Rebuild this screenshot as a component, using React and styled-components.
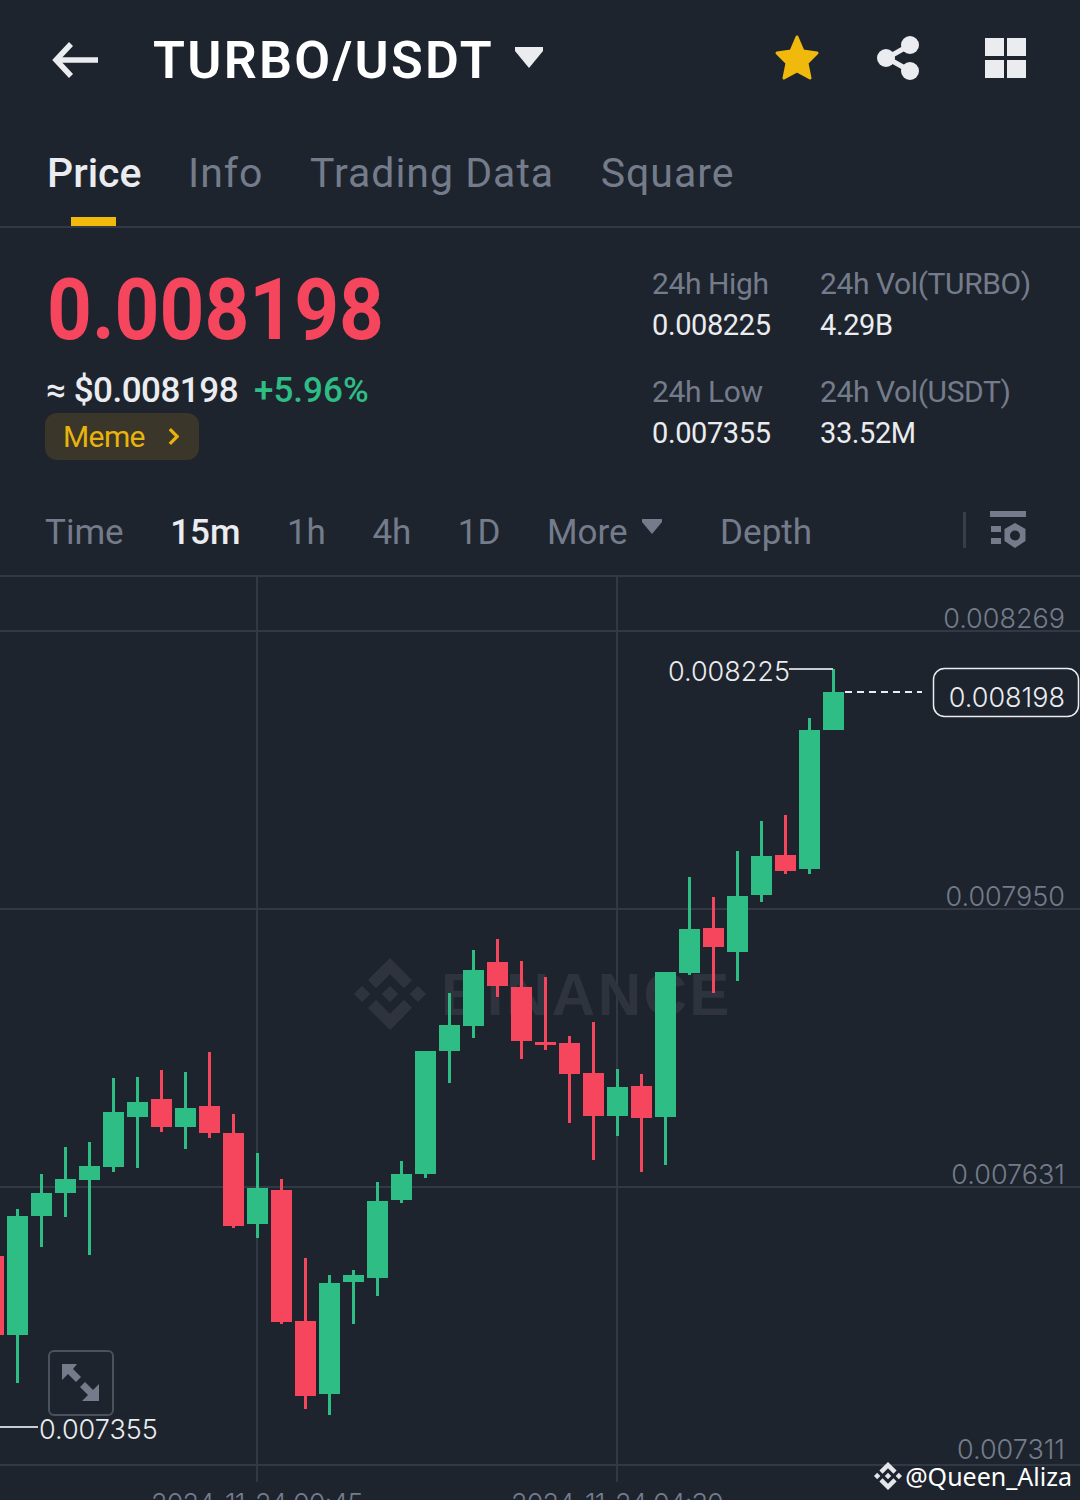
import React from "react";
import styled, { createGlobalStyle } from "styled-components";

const GREEN = "#2ebd85";
const RED = "#f6465d";
const BG = "#1e242e";
const MUTED = "#747c8b";
const LIGHT = "#eaecef";
const GRID = "#333944";

const GlobalStyle = createGlobalStyle`
  html, body {
    margin: 0;
    padding: 0;
    background: ${BG};
  }
`;

const Page = styled.div`
  width: 1080px;
  height: 1500px;
  display: flex;
  flex-direction: column;
  overflow: hidden;
  background: ${BG};
  font-family: Roboto, "Noto Sans", sans-serif;
  color: ${LIGHT};
`;

const Header = styled.header`
  height: 120px;
  display: flex;
  align-items: center;
  padding: 0 54px 0 52px;
  flex-shrink: 0;
`;

const Title = styled.h1`
  margin: 0 0 0 55px;
  font-size: 52px;
  font-weight: 600;
  color: #fff;
  letter-spacing: 2.3px;
`;

const TitleCaret = styled.svg`
  width: 28px;
  height: 21px;
  margin: 0 0 5px 21px;
`;

const HeaderIcons = styled.div`
  margin-left: auto;
  display: flex;
  align-items: center;
  gap: 57px;
  padding-bottom: 4px;
`;

const GridIcon = styled.svg`
  margin-left: 7px;
`;

const Tabs = styled.nav`
  height: 106px;
  display: flex;
  gap: 46.5px;
  padding-left: 47px;
  border-bottom: 2px solid ${GRID};
  flex-shrink: 0;
`;

const Tab = styled.div`
  position: relative;
  padding-top: 29px;
  font-size: 41px;
  font-weight: ${(p) => (p.$active ? 500 : 400)};
  letter-spacing: ${(p) => (p.$active ? 0 : 1)}px;
  color: ${(p) => (p.$active ? LIGHT : MUTED)};

  &::after {
    content: "";
    display: ${(p) => (p.$active ? "block" : "none")};
    position: absolute;
    left: 24px;
    bottom: 0;
    width: 45px;
    height: 9px;
    background: #f0b90b;
  }
`;

const Stats = styled.section`
  height: 262px;
  display: flex;
  justify-content: space-between;
  flex-shrink: 0;
`;

const Quote = styled.div`
  padding: 34px 0 0 46px;
`;

const BigPrice = styled.div`
  font-size: 86px;
  line-height: 96px;
  font-weight: 700;
  color: ${RED};
  margin-left: 1px;
  transform: scaleX(0.91);
  transform-origin: left center;
`;

const SubLine = styled.div`
  display: flex;
  gap: 16px;
  margin-top: 13px;
  font-size: 35px;
  line-height: 40px;
  font-weight: 500;
`;

const Approx = styled.span`
  letter-spacing: -0.5px;
`;

const Change = styled.span`
  color: ${GREEN};
`;

const MemeTag = styled.div`
  width: 154px;
  height: 47px;
  box-sizing: border-box;
  margin: 2px 0 0 -1px;
  padding: 0 0 0 18px;
  display: flex;
  align-items: center;
  gap: 23px;
  border-radius: 12px;
  background: #3a3629;
  color: #e8b30e;
  font-size: 30px;
  letter-spacing: -0.6px;
`;

const StatsGrid = styled.div`
  display: grid;
  grid-template-columns: 168px 214px;
  grid-auto-rows: 108px;
  margin: 38px 46px 0 0;
`;

const StatCell = styled.div`
  display: flex;
  flex-direction: column;
  gap: 5px;
  white-space: nowrap;
`;

const StatLabel = styled.span`
  font-size: 30px;
  line-height: 36px;
  letter-spacing: -0.4px;
  color: ${MUTED};
`;

const StatValue = styled.span`
  font-size: 29px;
  line-height: 36px;
  letter-spacing: -0.4px;
  color: ${LIGHT};
`;

const Toolbar = styled.div`
  height: 85px;
  display: flex;
  align-items: center;
  gap: 46.5px;
  padding: 0 54px 0 45px;
  flex-shrink: 0;
  box-sizing: border-box;
`;

const Interval = styled.span`
  display: inline-flex;
  align-items: center;
  font-size: 35px;
  font-weight: ${(p) => (p.$active ? 500 : 400)};
  color: ${(p) => (p.$active ? LIGHT : MUTED)};
`;

const MoreCaret = styled.svg`
  width: 20px;
  height: 15px;
  margin: 0 0 12px 14px;
`;

const DepthTab = styled(Interval)`
  margin-left: 12px;
`;

const ToolbarEnd = styled.div`
  margin-left: auto;
  display: flex;
  align-items: center;
  gap: 24px;
  margin-bottom: 6px;
`;

const Divider = styled.div`
  width: 3px;
  height: 36px;
  background: #373d49;
`;

const Chart = styled.div`
  position: relative;
  flex: 1;
  min-height: 0;
  border-top: 2px solid ${GRID};
`;

const ChartSvg = styled.svg`
  display: block;
  width: 1080px;
  height: 923px;
`;

const AxisText = styled.text`
  font-family: Inter, "Liberation Sans", sans-serif;
  font-size: 27px;
  font-weight: 300;
  fill: ${MUTED};
`;

const DateText = styled(AxisText)`
  letter-spacing: -0.9px;
`;

const MarkText = styled(AxisText)`
  fill: ${LIGHT};
`;

const Watermark = styled.text`
  font-family: "Liberation Sans", Inter, sans-serif;
  font-size: 60px;
  font-weight: 700;
  letter-spacing: 2.5px;
  fill: #2e333e;
`;

const ExpandButton = styled.div`
  position: absolute;
  left: 48px;
  top: 773px;
  width: 66px;
  height: 66px;
  box-sizing: border-box;
  display: flex;
  align-items: center;
  justify-content: center;
  border: 2px solid #4b515d;
  border-radius: 6px;
`;

const Credit = styled.div`
  position: absolute;
  right: 8px;
  bottom: 6px;
  display: flex;
  align-items: center;
  gap: 3px;
  font-family: "Noto Sans", Roboto, sans-serif;
  font-size: 25px;
  line-height: 36px;
  color: #fff;
`;

// [x center, wick top, body top, body bottom, wick bottom, colour]
const candles = [
  [-7, 1256, 1256, 1335, 1335, RED],
  [17, 1209, 1216, 1335, 1383, GREEN],
  [41, 1174, 1193, 1216, 1247, GREEN],
  [65, 1147, 1179, 1193, 1217, GREEN],
  [89, 1142, 1166, 1180, 1255, GREEN],
  [113, 1078, 1112, 1167, 1172, GREEN],
  [137, 1077, 1102, 1117, 1168, GREEN],
  [161, 1070, 1099, 1127, 1132, RED],
  [185, 1072, 1108, 1127, 1149, GREEN],
  [209, 1052, 1106, 1133, 1138, RED],
  [233, 1114, 1133, 1226, 1228, RED],
  [257, 1153, 1188, 1224, 1238, GREEN],
  [281, 1179, 1190, 1322, 1324, RED],
  [305, 1258, 1321, 1396, 1409, RED],
  [329, 1275, 1283, 1394, 1415, GREEN],
  [353, 1270, 1275, 1282, 1324, GREEN],
  [377, 1182, 1201, 1278, 1296, GREEN],
  [401, 1161, 1174, 1200, 1203, GREEN],
  [425, 1051, 1051, 1174, 1178, GREEN],
  [449, 993, 1025, 1051, 1083, GREEN],
  [473, 950, 970, 1026, 1038, GREEN],
  [497, 939, 962, 986, 997, RED],
  [521, 961, 987, 1041, 1059, RED],
  [545, 977, 1042, 1045, 1050, RED],
  [569, 1036, 1043, 1074, 1123, RED],
  [593, 1022, 1073, 1116, 1160, RED],
  [617, 1069, 1087, 1116, 1136, GREEN],
  [641, 1074, 1086, 1118, 1172, RED],
  [665, 972, 972, 1117, 1165, GREEN],
  [689, 877, 929, 973, 975, GREEN],
  [713, 897, 928, 947, 993, RED],
  [737, 851, 896, 952, 981, GREEN],
  [761, 821, 856, 895, 902, GREEN],
  [785, 815, 855, 871, 874, RED],
  [809, 718, 730, 869, 874, GREEN],
  [833, 669, 692, 730, 730, GREEN],
];

const axisLabels = [
  ["0.008269", 628],
  ["0.007950", 906],
  ["0.007631", 1184],
  ["0.007311", 1459],
];

const BinanceLogo = ({ x, y, size, fill, ...rest }) => (
  <svg x={x} y={y} width={size} height={size} viewBox="0 0 126.61 126.61" fill={fill} {...rest}>
    <path d="M38.73 53.2l24.59-24.58 24.6 24.6 14.3-14.31L63.32 0 24.42 38.9l14.31 14.3z" />
    <path d="M0 63.31l14.3-14.31 14.31 14.31-14.31 14.3z" />
    <path d="M38.73 73.41l24.59 24.59 24.6-24.6 14.31 14.29L63.32 126.61 24.42 87.72l14.31-14.31z" />
    <path d="M98 63.31l14.3-14.31 14.31 14.3-14.31 14.31z" />
    <path d="M77.83 63.3L63.32 48.78 52.59 59.51l-1.24 1.23-2.54 2.54 14.51 14.52 14.51-14.51z" />
  </svg>
);

const Candle = ({ data }) => {
  const [x, wickTop, bodyTop, bodyBottom, wickBottom, color] = data;
  return (
    <g fill={color}>
      <rect x={x - 1} y={wickTop} width={3} height={wickBottom - wickTop} />
      <rect x={x - 10} y={bodyTop} width={21} height={bodyBottom - bodyTop} />
    </g>
  );
};

const App = () => (
  <Page>
    <GlobalStyle />
    <Header>
      <svg width="46" height="36" viewBox="0 0 46 36" fill="none" stroke={LIGHT} strokeWidth="5.5">
        <path d="M19 2 L4 18 L19 34" />
        <path d="M4 18 H46" />
      </svg>
      <Title>TURBO/USDT</Title>
      <TitleCaret viewBox="0 0 28 21">
        <path d="M0 0 H28 V4 L14 21 L0 4 Z" fill={LIGHT} />
      </TitleCaret>
      <HeaderIcons>
        <svg width="46" height="46" viewBox="0 0 46 46">
          <path
            d="M23 2 L29 16 L43 18 L33 28 L36 43 L23 36 L10 43 L13 28 L3 18 L17 16 Z"
            fill="#f0b90b"
            stroke="#f0b90b"
            strokeWidth="3"
            strokeLinejoin="round"
          />
        </svg>
        <svg width="44" height="46" viewBox="0 0 44 46" fill={LIGHT} stroke={LIGHT}>
          <path d="M33 10 L10 23 L33 36" fill="none" strokeWidth="5" />
          <circle cx="33" cy="10" r="9" stroke="none" />
          <circle cx="9" cy="23" r="9" stroke="none" />
          <circle cx="33" cy="36" r="9" stroke="none" />
        </svg>
        <GridIcon width="41" height="40" viewBox="0 0 41 40" fill={LIGHT}>
          <rect x="0" y="0" width="19" height="18" />
          <rect x="22" y="0" width="19" height="18" />
          <rect x="0" y="22" width="19" height="18" />
          <rect x="22" y="22" width="19" height="18" />
        </GridIcon>
      </HeaderIcons>
    </Header>

    <Tabs>
      <Tab $active>Price</Tab>
      <Tab>Info</Tab>
      <Tab>Trading Data</Tab>
      <Tab>Square</Tab>
    </Tabs>

    <Stats>
      <Quote>
        <BigPrice>0.008198</BigPrice>
        <SubLine>
          <Approx>≈ $0.008198</Approx>
          <Change>+5.96%</Change>
        </SubLine>
        <MemeTag>
          Meme
          <svg width="11" height="17" viewBox="0 0 12 18" fill="none" stroke="#e8b30e" strokeWidth="3.5">
            <path d="M2 1 L10 9 L2 17" />
          </svg>
        </MemeTag>
      </Quote>
      <StatsGrid>
        <StatCell>
          <StatLabel>24h High</StatLabel>
          <StatValue>0.008225</StatValue>
        </StatCell>
        <StatCell>
          <StatLabel>24h Vol(TURBO)</StatLabel>
          <StatValue>4.29B</StatValue>
        </StatCell>
        <StatCell>
          <StatLabel>24h Low</StatLabel>
          <StatValue>0.007355</StatValue>
        </StatCell>
        <StatCell>
          <StatLabel>24h Vol(USDT)</StatLabel>
          <StatValue>33.52M</StatValue>
        </StatCell>
      </StatsGrid>
    </Stats>

    <Toolbar>
      <Interval>Time</Interval>
      <Interval $active>15m</Interval>
      <Interval>1h</Interval>
      <Interval>4h</Interval>
      <Interval>1D</Interval>
      <Interval>
        More
        <MoreCaret viewBox="0 0 20 15">
          <path d="M0 0 H20 V3 L10 15 L0 3 Z" fill={MUTED} />
        </MoreCaret>
      </Interval>
      <DepthTab>Depth</DepthTab>
      <ToolbarEnd>
        <Divider />
        <svg width="36" height="37" viewBox="0 0 36 37" fill={MUTED}>
          <rect x="0" y="0" width="36" height="6" />
          <rect x="1" y="15" width="10" height="6" />
          <rect x="1" y="27" width="10" height="6" />
          <path
            fillRule="evenodd"
            d="M25 12 L35.5 18 V30 L25 37 L14.5 30 V18 Z M25 19.5 A5 5 0 1 0 25 29.5 A5 5 0 1 0 25 19.5 Z"
          />
        </svg>
      </ToolbarEnd>
    </Toolbar>

    <Chart>
      <ChartSvg viewBox="0 577 1080 923">
        <g fill={GRID}>
          <rect x="0" y="630" width="1080" height="2" />
          <rect x="0" y="908" width="1080" height="2" />
          <rect x="0" y="1186" width="1080" height="2" />
          <rect x="0" y="1464" width="1080" height="2" />
          <rect x="256" y="577" width="2" height="905" />
          <rect x="616" y="577" width="2" height="905" />
        </g>

        <BinanceLogo x={354} y={958} size={72} fill="#2e333e" />
        <Watermark x={441} y={1015}>BINANCE</Watermark>

        {candles.map((c) => (
          <Candle key={c[0]} data={c} />
        ))}

        {axisLabels.map(([label, y]) => (
          <AxisText key={label} x={1065} y={y} textAnchor="end">{label}</AxisText>
        ))}
        <DateText x={151} y={1513}>2024-11-24 00:45</DateText>
        <DateText x={511} y={1513}>2024-11-24 04:30</DateText>

        <path d="M789 669 H833" stroke="#c9ccd2" strokeWidth="2" fill="none" />
        <MarkText x={668} y={681}>0.008225</MarkText>

        <path d="M845 692 H922" stroke={LIGHT} strokeWidth="2" strokeDasharray="7 5" fill="none" />
        <rect x="933.5" y="668.5" width="145" height="48" rx="11" fill={BG} stroke={LIGHT} strokeWidth="1.5" />
        <MarkText x={1065} y={707} textAnchor="end">0.008198</MarkText>

        <path d="M0 1427 H38" stroke="#c9ccd2" strokeWidth="2" fill="none" />
        <MarkText x={39} y={1439}>0.007355</MarkText>
      </ChartSvg>

      <ExpandButton>
        <svg width="38" height="38" viewBox="0 0 38 38" fill={MUTED}>
          <path d="M0 0 H15 L11 5 L19 13 L14 18 L6 10 L0 16 Z" />
          <path d="M37 37 H20 L26 31 L18 23 L23 18 L31 26 L37 20 Z" />
        </svg>
      </ExpandButton>

      <Credit>
        <BinanceLogo size={28} fill="#e4e6ea" />
        @Queen_Aliza
      </Credit>
    </Chart>
  </Page>
);

export default App;
